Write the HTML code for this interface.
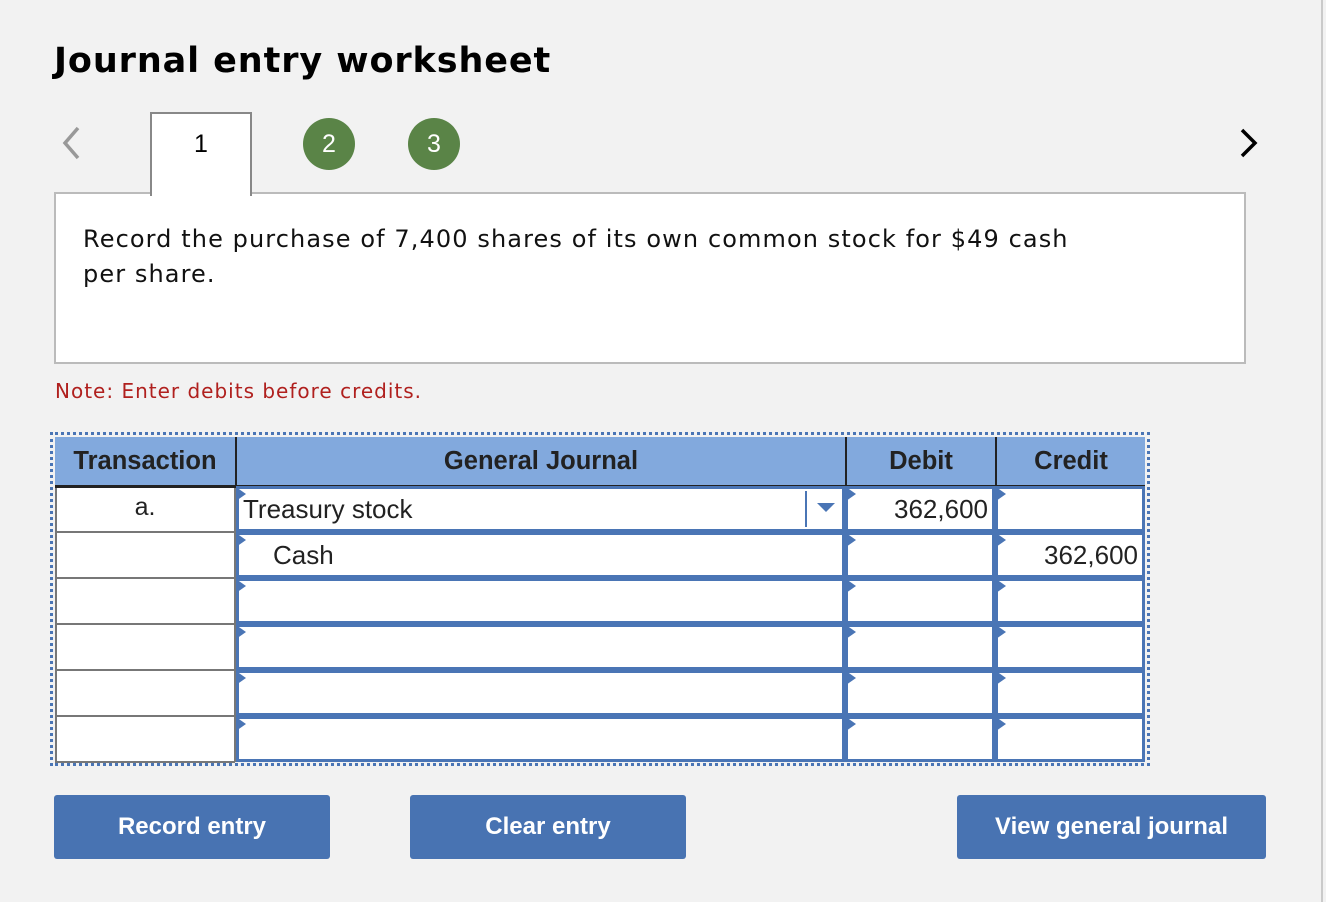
<!DOCTYPE html>
<html><head><meta charset="utf-8"><style>
*{margin:0;padding:0;box-sizing:border-box}
body{width:1326px;height:902px;background:#f2f2f2;position:relative;overflow:hidden;font-family:"Liberation Sans",Arial,sans-serif}
.a{position:absolute}
h1{position:absolute;left:54px;top:41px;font-family:"DejaVu Sans",Verdana,sans-serif;font-weight:bold;font-size:35px;color:#000;letter-spacing:0.9px}
.v{font-family:"DejaVu Sans",Verdana,sans-serif}
.circ{width:52px;height:52px;border-radius:50%;background:#5a8447;color:#fff;font-size:25px;text-align:center;line-height:52px}
.hd{background:#82a9dd;font-weight:bold;font-size:25.5px;color:#222;text-align:center;line-height:48px;border-right:2px solid #222;border-bottom:3px solid #222}
.cell{border:3px solid #4a75b5;background:#fff;font-size:26px;color:#222}
.tri{position:absolute;width:0;height:0;border-top:7px solid transparent;border-bottom:7px solid transparent;border-left:10px solid #4a75b5}
.btn{background:#4873b2;color:#fff;font-weight:bold;font-size:24px;text-align:center;line-height:64px;border-radius:3px;height:64px;top:795px}
</style></head><body>
<div class="a" style="left:1321px;top:0;width:2px;height:902px;background:#cacaca"></div>
<h1>Journal entry worksheet</h1>
<svg class="a" style="left:58px;top:125px" width="26" height="36"><path d="M20 3 L7 18 L20 33" stroke="#999" stroke-width="3.5" fill="none"/></svg>
<svg class="a" style="left:1236px;top:125px" width="26" height="36"><path d="M6 5 L19 18 L6 31" stroke="#000" stroke-width="3.5" fill="none"/></svg>
<div class="a" style="left:54px;top:192px;width:1192px;height:172px;background:#fff;border:2px solid #bbb"></div>
<div class="a" style="left:150px;top:112px;width:102px;height:84px;background:#fff;border:2px solid #888;border-bottom:none;text-align:center;font-size:25px;line-height:60px;color:#000">1</div>
<div class="a circ" style="left:303px;top:118px">2</div>
<div class="a circ" style="left:408px;top:118px">3</div>
<div class="a v" style="left:83px;top:222px;font-size:24px;line-height:35px;color:#111;width:1150px;letter-spacing:1.1px">Record the purchase of 7,400 shares of its own common stock for $49 cash<br>per share.</div>
<div class="a v" style="left:55px;top:379px;font-size:20px;color:#b0201e;letter-spacing:1px">Note: Enter debits before credits.</div>
<div class="a" style="left:50px;top:432px;width:1100px;height:334px;border:3px dotted #4a75b5"></div>
<div class="a" style="left:55px;top:437px;width:1090px;height:325px;background:#fff;border-left:2px solid #777"></div>
<div class="a hd" style="left:55px;top:437px;width:182px;height:51px">Transaction</div>
<div class="a hd" style="left:237px;top:437px;width:610px;height:51px">General Journal</div>
<div class="a hd" style="left:847px;top:437px;width:150px;height:51px">Debit</div>
<div class="a hd" style="left:997px;top:437px;width:148px;height:51px;border-right:none">Credit</div>
<div class="a" style="left:55px;top:488px;width:182px;height:274px;border-right:3px solid #777"></div>
<div class="a" style="left:55px;top:531px;width:180px;height:2px;background:#777"></div>
<div class="a" style="left:55px;top:577px;width:180px;height:2px;background:#777"></div>
<div class="a" style="left:55px;top:623px;width:180px;height:2px;background:#777"></div>
<div class="a" style="left:55px;top:669px;width:180px;height:2px;background:#777"></div>
<div class="a" style="left:55px;top:715px;width:180px;height:2px;background:#777"></div>
<div class="a" style="left:55px;top:761px;width:180px;height:2px;background:#777"></div>
<div class="a" style="left:55px;top:493px;width:180px;text-align:center;font-size:25px;color:#222">a.</div>

<div class="a cell" style="left:236px;top:486px;width:609px;height:46px"><span style="position:absolute;left:4px;top:5px">Treasury stock</span><div style="position:absolute;left:566px;top:2px;width:2px;height:36px;background:#4a75b5"></div><div style="position:absolute;left:578px;top:14px;border-left:9px solid transparent;border-right:9px solid transparent;border-top:9px solid #4a75b5"></div></div>
<div class="a cell" style="left:845px;top:486px;width:150px;height:46px"><span style="position:absolute;right:4px;top:5px">362,600</span></div>
<div class="a cell" style="left:995px;top:486px;width:150px;height:46px"></div>

<div class="a cell" style="left:236px;top:532px;width:609px;height:46px"><span style="position:absolute;left:34px;top:5px">Cash</span></div>
<div class="a cell" style="left:845px;top:532px;width:150px;height:46px"></div>
<div class="a cell" style="left:995px;top:532px;width:150px;height:46px"><span style="position:absolute;right:4px;top:5px">362,600</span></div>

<div class="a cell" style="left:236px;top:578px;width:609px;height:46px"></div>
<div class="a cell" style="left:845px;top:578px;width:150px;height:46px"></div>
<div class="a cell" style="left:995px;top:578px;width:150px;height:46px"></div>
<div class="a cell" style="left:236px;top:624px;width:609px;height:46px"></div>
<div class="a cell" style="left:845px;top:624px;width:150px;height:46px"></div>
<div class="a cell" style="left:995px;top:624px;width:150px;height:46px"></div>
<div class="a cell" style="left:236px;top:670px;width:609px;height:46px"></div>
<div class="a cell" style="left:845px;top:670px;width:150px;height:46px"></div>
<div class="a cell" style="left:995px;top:670px;width:150px;height:46px"></div>
<div class="a cell" style="left:236px;top:716px;width:609px;height:46px"></div>
<div class="a cell" style="left:845px;top:716px;width:150px;height:46px"></div>
<div class="a cell" style="left:995px;top:716px;width:150px;height:46px"></div>

<div class="tri" style="left:236px;top:487px"></div><div class="tri" style="left:846px;top:487px"></div><div class="tri" style="left:996px;top:487px"></div>
<div class="tri" style="left:236px;top:533px"></div><div class="tri" style="left:846px;top:533px"></div><div class="tri" style="left:996px;top:533px"></div>
<div class="tri" style="left:236px;top:579px"></div><div class="tri" style="left:846px;top:579px"></div><div class="tri" style="left:996px;top:579px"></div>
<div class="tri" style="left:236px;top:625px"></div><div class="tri" style="left:846px;top:625px"></div><div class="tri" style="left:996px;top:625px"></div>
<div class="tri" style="left:236px;top:671px"></div><div class="tri" style="left:846px;top:671px"></div><div class="tri" style="left:996px;top:671px"></div>
<div class="tri" style="left:236px;top:717px"></div><div class="tri" style="left:846px;top:717px"></div><div class="tri" style="left:996px;top:717px"></div>

<div class="a btn" style="left:54px;width:276px">Record entry</div>
<div class="a btn" style="left:410px;width:276px">Clear entry</div>
<div class="a btn" style="left:957px;width:309px">View general journal</div>
</body></html>
